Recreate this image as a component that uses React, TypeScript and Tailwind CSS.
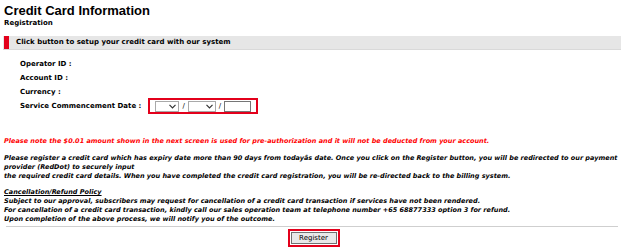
const fontStack = { fontFamily: '"DejaVu Sans", Verdana, sans-serif' };
const titleFont = { fontFamily: '"Liberation Sans", Arial, sans-serif' };

const Field = ({ label, children }: { label: string; children?: React.ReactNode }) => (
  <div className="flex items-center h-[14px]">
    <span className="font-bold text-[7px] leading-none text-black">{label}</span>
    {children}
  </div>
);

const SmallSelect = ({ w }: { w: string }) => (
  <div className={`${w} h-[11px] border border-[#a9a9a9] bg-white flex items-center justify-end pr-[2px]`}>
    <svg width="7" height="5" viewBox="0 0 7 5">
      <path d="M0.5 0.8 L3.5 3.8 L6.5 0.8" fill="none" stroke="#333" strokeWidth="1.2" />
    </svg>
  </div>
);

export default function App() {
  return (
    <div className="w-[624px] h-[250px] bg-white overflow-hidden text-black" style={fontStack}>
      <div className="pl-[4px] pt-[3px]">
        <h1 className="font-bold text-[13px] leading-[15px]" style={titleFont}>
          Credit Card Information
        </h1>
        <div className="font-bold text-[7px] leading-[9px] mt-[1px]">Registration</div>
      </div>

      <div className="mx-[3px] mt-[8px] h-[14px] bg-[#e6e6e6] border-b border-[#d9d9d9] flex items-center">
        <div className="w-[5px] h-full bg-[#e3001b] ml-[1px]" />
        <span className="ml-[7px] font-bold text-[7px] leading-none">
          Click button to setup your credit card with our system
        </span>
      </div>

      <div className="pl-[20px] mt-[7px] flex flex-col">
        <Field label="Operator ID :" />
        <Field label="Account ID :" />
        <Field label="Currency :" />
        <Field label="Service Commencement Date :">
          <div className="ml-[7px] border-2 border-[#e3001b] h-[16px] flex items-center gap-[3px] px-[5px]">
            <SmallSelect w="w-[24px]" />
            <span className="text-[7px] leading-none">/</span>
            <SmallSelect w="w-[28px]" />
            <span className="text-[7px] leading-none">/</span>
            <div className="w-[27px] h-[11px] border border-[#767676] bg-white" />
          </div>
        </Field>
      </div>

      <div className="pl-[4px] pr-[2px] mt-[24px] italic font-bold text-[6.5px] leading-[9px]">
        <p className="text-[#ff0000]">
          Please note the $0.01 amount shown in the next screen is used for pre-authorization and it will not be deducted from your account.
        </p>
        <p className="mt-[8px]">
          Please register a credit card which has expiry date more than 90 days from todayâs date. Once you click on the Register button, you will be redirected to our payment provider (RedDot) to securely input
          <br />
          the required credit card details. When you have completed the credit card registration, you will be re-directed back to the billing system.
        </p>
        <p className="mt-[7px]">
          <span className="underline">Cancellation/Refund Policy</span>
          <br />
          Subject to our approval, subscribers may request for cancellation of a credit card transaction if services have not been rendered.
          <br />
          For cancellation of a credit card transaction, kindly call our sales operation team at telephone number +65 68877333 option 3 for refund.
          <br />
          Upon completion of the above process, we will notify you of the outcome.
        </p>
      </div>

      <div className="mx-[6px] mt-[2px] border-t border-[#cfcfcf]" />

      <div className="flex justify-center mt-[2px]">
        <div className="border-2 border-[#e3001b] p-[1px] ml-[3px]">
          <button className="w-[46px] h-[12px] bg-[#e9e9e9] border border-[#707070] text-[7px] leading-none text-black flex items-center justify-center">
            Register
          </button>
        </div>
      </div>
    </div>
  );
}
